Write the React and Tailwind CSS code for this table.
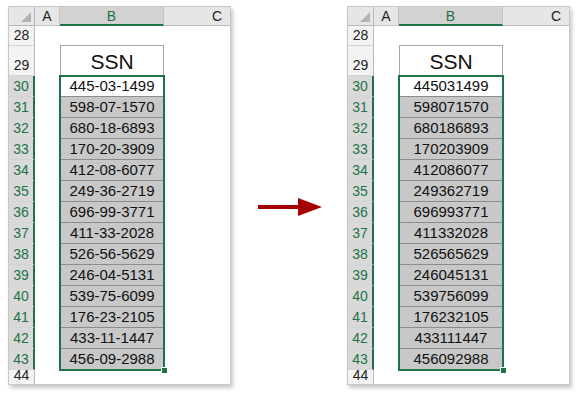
import React from 'react';

const ssnList = [
  '445-03-1499', '598-07-1570', '680-18-6893', '170-20-3909', '412-08-6077',
  '249-36-2719', '696-99-3771', '411-33-2028', '526-56-5629', '246-04-5131',
  '539-75-6099', '176-23-2105', '433-11-1447', '456-09-2988',
];

const GREEN = 'text-[#217346]';

const RowHead = ({ n, h, active }) => (
  <div
    className={`flex items-end justify-center border-b border-[#d4d4d4] text-[14px] leading-none ${h} ${
      active
        ? `bg-[#d9d9d9] ${GREEN} border-r-2 border-r-[#217346]`
        : 'bg-[#f3f3f3] text-[#222] border-r border-r-[#b8b8b8]'
    }`}
  >
    <span className="mb-[3px]">{n}</span>
  </div>
);

// one spreadsheet window, values shown in column B
const Sheet = ({ values }) => (
  <div className="w-[223px] h-[379px] overflow-hidden border border-[#c8c8c8] bg-white shadow-[2px_3px_4px_rgba(0,0,0,0.22)]">
    {/* column headers */}
    <div className="flex h-[19px] text-[14px] leading-none text-[#222]">
      <div className="relative w-[26px] bg-[#e6e6e6] border-r border-b border-[#b8b8b8]">
        <div className="absolute right-[3px] bottom-[3px] w-0 h-0 border-l-[10px] border-l-transparent border-b-[10px] border-b-[#b4b4b4]" />
      </div>
      <div className="w-[25px] flex items-center justify-center bg-[#e6e6e6] border-r border-b border-[#c4c4c4]">A</div>
      <div className={`w-[104px] flex items-center justify-center bg-[#d2d2d2] border-r border-[#c4c4c4] border-b-2 border-b-[#217346] ${GREEN}`}>B</div>
      <div className="flex-1 flex items-center justify-end pr-[8px] bg-[#e6e6e6] border-b border-[#b8b8b8]">C</div>
    </div>

    <div className="flex">
      {/* row numbers */}
      <div className="w-[26px] flex flex-col">
        <RowHead n={28} h="h-[20px]" />
        <RowHead n={29} h="h-[30px]" />
        {values.map((_, i) => (
          <RowHead key={i} n={30 + i} h="h-[21px]" active />
        ))}
        <RowHead n={44} h="h-[16px]" />
      </div>

      <div className="w-[25px]" />

      {/* column B */}
      <div className="w-[104px] flex flex-col text-[15px] leading-none text-[#111]">
        <div className="h-[20px] border-b border-[#a6a6a6]" />
        <div className="h-[30px] flex items-end justify-center pb-[4px] border-x border-[#a6a6a6] text-[21px]">SSN</div>
        <div className="relative outline-2 outline-[#217346] -outline-offset-1">
          {values.map((v, i) => (
            <div
              key={v}
              className={`h-[21px] flex items-end justify-center pb-[3px] border-b border-x border-x-white border-b-[#8c8c8c] ${
                i === 0 ? 'bg-white' : 'bg-[#c8c8c8]'
              }`}
            >
              {v}
            </div>
          ))}
          <div className="absolute -right-[4px] -bottom-[4px] w-[7px] h-[7px] bg-[#217346] border border-white" />
        </div>
      </div>

      <div className="flex-1" />
    </div>
  </div>
);

export default function App() {
  const stripped = ssnList.map((s) => s.replace(/-/g, ''));
  return (
    <div className="w-[578px] h-[396px] bg-white flex items-start pl-[8px] pt-[6px] font-['Liberation_Sans',Arial,sans-serif]">
      <Sheet values={ssnList} />
      <div className="w-[116px] h-[379px] flex items-center pl-[27px]">
        <svg width="64" height="18" viewBox="0 0 64 18" className="mt-[22px]">
          <rect x="0" y="7" width="42" height="4" fill="#a50000" />
          <polygon points="40,0 64,9 40,18" fill="#a50000" />
        </svg>
      </div>
      <Sheet values={stripped} />
    </div>
  );
}
